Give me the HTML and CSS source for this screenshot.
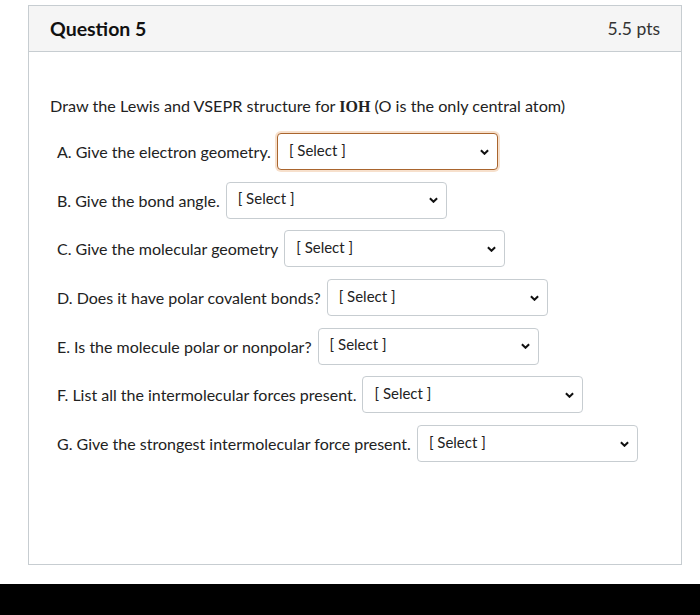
FILE: index.html
```html
<!DOCTYPE html>
<html lang="en">
<head>
  <meta charset="UTF-8">
  <meta name="viewport" content="width=device-width, initial-scale=1.0">
  <title>Question 5</title>
  <link rel="stylesheet" href="styles.css">
</head>
<body>
  <div class="page">
    <div class="question">
      <div class="question-header">
        <span class="question-name">Question 5</span>
        <span class="question-points">5.5 pts</span>
      </div>

      <div class="question-body">
        <p class="question-text">Draw the Lewis and VSEPR structure for <b class="formula">IOH</b> (O is the only central atom)</p>

        <div class="row">
          <span class="label">A. Give the electron geometry.</span>
          <div class="select focused"><span>[ Select ]</span><svg viewBox="0 0 10 6"><path d="M1 1l4 4 4-4"/></svg></div>
        </div>
        <div class="row">
          <span class="label">B. Give the bond angle.</span>
          <div class="select"><span>[ Select ]</span><svg viewBox="0 0 10 6"><path d="M1 1l4 4 4-4"/></svg></div>
        </div>
        <div class="row">
          <span class="label">C. Give the molecular geometry</span>
          <div class="select"><span>[ Select ]</span><svg viewBox="0 0 10 6"><path d="M1 1l4 4 4-4"/></svg></div>
        </div>
        <div class="row">
          <span class="label">D. Does it have polar covalent bonds?</span>
          <div class="select"><span>[ Select ]</span><svg viewBox="0 0 10 6"><path d="M1 1l4 4 4-4"/></svg></div>
        </div>
        <div class="row">
          <span class="label">E. Is the molecule polar or nonpolar?</span>
          <div class="select"><span>[ Select ]</span><svg viewBox="0 0 10 6"><path d="M1 1l4 4 4-4"/></svg></div>
        </div>
        <div class="row">
          <span class="label">F. List all the intermolecular forces present.</span>
          <div class="select"><span>[ Select ]</span><svg viewBox="0 0 10 6"><path d="M1 1l4 4 4-4"/></svg></div>
        </div>
        <div class="row">
          <span class="label">G. Give the strongest intermolecular force present.</span>
          <div class="select"><span>[ Select ]</span><svg viewBox="0 0 10 6"><path d="M1 1l4 4 4-4"/></svg></div>
        </div>
      </div>
    </div>
  </div>
  <div class="bottom-bar"></div>
</body>
</html>
```

FILE: styles.css
```css
body {
  margin: 0;
  height: 615px;
  display: flex;
  flex-direction: column;
  background: #fff;
  font-family: Lato, "Open Sans", sans-serif;
  color: #222;
}
.page {
  flex: 1;
  padding: 5px 18px 0 28px;
}
.question {
  height: 560px;
  border: 1px solid #c7cdd1;
  box-sizing: border-box;
}
.question-header {
  height: 45px;
  background: #f5f5f5;
  border-bottom: 1px solid #c7cdd1;
  display: flex;
  align-items: center;
  justify-content: space-between;
  padding: 0 21px 0 21px;
}
.question-name { font-size: 19.5px; font-weight: bold; color: #111; }
.question-points { font-size: 17.5px; color: #333; }

.question-body { padding: 43px 0 0 21px; }
.question-text { margin: 0 0 15px 0; font-size: 16.2px; line-height: 22px; }
.formula { font-family: "Liberation Serif", serif; font-size: 16px; }

.row {
  display: flex;
  align-items: center;
  height: 37px;
  margin: 0 0 11.7px 7px;
  font-size: 16px;
}
.label { margin-right: 6px; }
.select {
  width: 221px;
  height: 37px;
  box-sizing: border-box;
  border: 1px solid #c7cdd1;
  border-radius: 4px;
  background: #fff;
  display: flex;
  align-items: center;
  justify-content: space-between;
  padding: 0 8px 4px 11px;
  font-size: 15px;
  color: #222;
}
.select svg {
  width: 9px;
  height: 6px;
  margin-top: 4px;
  fill: none;
  stroke: #111;
  stroke-width: 2.2;
}
.select.focused {
  border-color: #a9652e;
  box-shadow: 0 0 0 2px #f7e0cc;
}
.bottom-bar { height: 31px; background: #000; }
```
